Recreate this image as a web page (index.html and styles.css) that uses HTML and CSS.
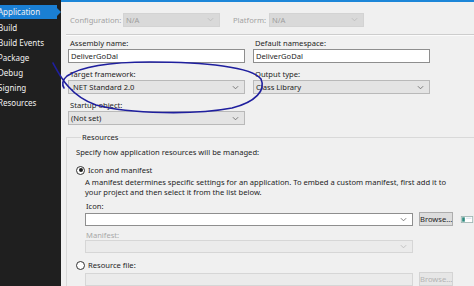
FILE: index.html
```html
<!DOCTYPE html>
<html>
<head>
<meta charset="utf-8">
<link rel="stylesheet" href="styles.css">
</head>
<body>
<div class="page">
  <nav class="sidebar">
    <div class="nav-item selected">Application</div>
    <div class="nav-item">Build</div>
    <div class="nav-item">Build Events</div>
    <div class="nav-item">Package</div>
    <div class="nav-item">Debug</div>
    <div class="nav-item">Signing</div>
    <div class="nav-item">Resources</div>
  </nav>
  <main class="main">
    <div class="topline"></div>
    <div class="config-row">
      <span class="dim-label cfg-label">Configuration:</span>
      <div class="combo disabled cfg-combo"><span>N/A</span><svg class="chev" viewBox="0 0 8 5"><polyline points="1,1 4,4 7,1"/></svg></div>
      <span class="dim-label plat-label">Platform:</span>
      <div class="combo disabled plat-combo"><span>N/A</span><svg class="chev" viewBox="0 0 8 5"><polyline points="1,1 4,4 7,1"/></svg></div>
    </div>
    <div class="separator"></div>
    <div class="form-grid">
      <div class="field">
        <label class="lbl">Assembly name:</label>
        <div class="textbox">DeliverGoDal</div>
      </div>
      <div class="field">
        <label class="lbl">Default namespace:</label>
        <div class="textbox">DeliverGoDal</div>
      </div>
      <div class="field">
        <label class="lbl">Target framework:</label>
        <div class="combo"><span>.NET Standard 2.0</span><svg class="chev" viewBox="0 0 8 5"><polyline points="1,1 4,4 7,1"/></svg></div>
      </div>
      <div class="field">
        <label class="lbl">Output type:</label>
        <div class="combo"><span>Class Library</span><svg class="chev" viewBox="0 0 8 5"><polyline points="1,1 4,4 7,1"/></svg></div>
      </div>
      <div class="field">
        <label class="lbl">Startup object:</label>
        <div class="combo"><span>(Not set)</span><svg class="chev" viewBox="0 0 8 5"><polyline points="1,1 4,4 7,1"/></svg></div>
      </div>
    </div>
    <fieldset class="group">
      <legend class="legend">Resources</legend>
      <p class="line specify">Specify how application resources will be managed:</p>
      <div class="radio-row">
        <span class="radio checked"></span><span>Icon and manifest</span>
      </div>
      <div class="indent">
        <p class="line">A manifest determines specific settings for an application. To embed a custom manifest, first add it to</p>
        <p class="line">your project and then select it from the list below.</p>
        <p class="line icon-label">Icon:</p>
        <div class="browse-row">
          <div class="combo white wide"><span></span><svg class="chev" viewBox="0 0 8 5"><polyline points="1,1 4,4 7,1"/></svg></div>
          <div class="button">Browse...</div>
          <svg class="app-icon" viewBox="0 0 14 8"><rect x="0.5" y="0.5" width="13" height="7" fill="#ffffff" stroke="#9fb6b3"/><rect x="1.5" y="1.5" width="3" height="5" fill="#2d8a7e"/><rect x="6" y="2" width="6" height="1" fill="#c9d9e8"/></svg>
        </div>
        <p class="line dim manifest-label">Manifest:</p>
        <div class="combo faded wide"><span></span><svg class="chev" viewBox="0 0 8 5"><polyline points="1,1 4,4 7,1"/></svg></div>
      </div>
      <div class="radio-row res-row">
        <span class="radio"></span><span>Resource file:</span>
      </div>
      <div class="indent">
        <div class="browse-row">
          <div class="textbox faded-box wide"></div>
          <div class="button disabled-btn">Browse...</div>
        </div>
      </div>
    </fieldset>
  </main>
  <svg class="scribble" viewBox="0 0 474 286" width="474" height="286">
    <path d="M53 63 C60 76 70 96 96 105 C130 114 195 115 232 108 C256 102 266 90 261 79 C252 67 205 62 150 62 C112 62 82 66 67 76 C62 80 62 85 64 88"/>
  </svg>
</div>
</body>
</html>
```

FILE: styles.css
```css
* { box-sizing: border-box; }
html, body {
  margin: 0;
  padding: 0;
  width: 474px;
  height: 286px;
  overflow: hidden;
  background: #f0f0f0;
  font-family: "Noto Sans", "Open Sans", sans-serif;
  font-size: 7.6px;
  color: #1e1e1e;
}
.page {
  position: relative;
  display: flex;
  width: 474px;
  height: 286px;
}
.sidebar {
  width: 61px;
  flex: none;
  background: #1f1f1f;
  padding-top: 5px;
  color: #f1f1f1;
  font-size: 8px;
}
.nav-item {
  position: relative;
  height: 15px;
  line-height: 15px;
  padding-left: 0;
  text-indent: -2px;
  white-space: nowrap;
  overflow: visible;
}
.nav-item.selected {
  background: #1a7fd4;
  width: 57px;
  height: 14px;
  line-height: 14px;
  margin-bottom: 1px;
}
.nav-item.selected::after {
  content: "";
  position: absolute;
  right: -4px;
  top: 3px;
  border-left: 4px solid #1a7fd4;
  border-top: 4px solid transparent;
  border-bottom: 4px solid transparent;
}
.main {
  flex: 1;
  padding-left: 7px;
  display: flex;
  flex-direction: column;
}
.topline {
  height: 2px;
  background: #1c86d8;
  margin-left: -7px;
}
.config-row {
  display: flex;
  align-items: center;
  margin-top: 11px;
  height: 13px;
}
.dim-label { color: #a2a2a2; }
.cfg-label { margin-left: 2px; width: 53px; }
.cfg-combo { width: 97px; height: 13px; }
.plat-label { margin-left: 13px; width: 36px; }
.plat-combo { width: 95px; height: 13px; }
.separator {
  margin-top: 8px;
  margin-left: -2px;
  height: 2px;
  border-top: 1px solid #cdcdcd;
  border-bottom: 1px solid #fbfbfb;
}
.form-grid {
  display: grid;
  grid-template-columns: 177px 177px;
  column-gap: 8px;
  row-gap: 6px;
  margin-top: 2px;
}
.field {
  display: flex;
  flex-direction: column;
}
.lbl {
  height: 11px;
  line-height: 11px;
  padding-left: 2px;
}
.textbox {
  height: 14px;
  background: #ffffff;
  border: 1px solid #8e8e8e;
  line-height: 12px;
  padding-left: 2px;
  white-space: nowrap;
}
.textbox.faded-box {
  background: #ebebeb;
  border-color: #d6d6d6;
}
.combo {
  height: 14px;
  display: flex;
  align-items: center;
  justify-content: space-between;
  background: #e4e4e4;
  border: 1px solid #b9b9b9;
  padding: 0 5px 0 2px;
  white-space: nowrap;
}
.combo.disabled {
  background: #d9d9d9;
  border-color: #d3d3d3;
  color: #9d9d9d;
}
.combo.white {
  background: #ffffff;
  border-color: #8e8e8e;
}
.combo.faded {
  background: #ebebeb;
  border-color: #d6d6d6;
}
.chev {
  width: 7px;
  height: 5px;
  fill: none;
  stroke: #6d6d6d;
  stroke-width: 1;
}
.combo.disabled .chev, .combo.faded .chev { stroke: #bdbdbd; }
.group {
  margin: 7px 0 0 -2px;
  padding: 0 0 0 9px;
  border: 1px solid #d9d9d9;
  border-right: none;
  border-bottom: none;
  min-width: 0;
}
.legend {
  padding: 0 1px;
  margin-left: 5px;
  line-height: 10px;
  height: 10px;
}
.line {
  margin: 0;
  line-height: 10px;
  height: 10px;
  white-space: nowrap;
}
.specify { margin-top: 5px; }
.radio-row {
  display: flex;
  align-items: center;
  height: 10px;
  margin-top: 8px;
  gap: 3px;
}
.radio {
  width: 9px;
  height: 9px;
  border-radius: 50%;
  border: 1px solid #333333;
  background: #ffffff;
  position: relative;
  flex: none;
}
.radio.checked::after {
  content: "";
  position: absolute;
  left: 1.5px;
  top: 1.5px;
  width: 4px;
  height: 4px;
  border-radius: 50%;
  background: #1e1e1e;
}
.indent {
  padding-left: 9px;
  display: flex;
  flex-direction: column;
}
.indent > .line:first-child { margin-top: 2px; }
.icon-label { margin-top: 4px; padding-left: 1px; }
.browse-row {
  display: flex;
  align-items: center;
  gap: 6px;
  margin-top: 1px;
}
.wide { width: 328px; flex: none; height: 13px; }
.button {
  width: 34px;
  height: 14px;
  flex: none;
  background: #dddddd;
  border: 1px solid #adadad;
  line-height: 12px;
  text-align: center;
}
.disabled-btn {
  background: #e6e6e6;
  border-color: #d4d4d4;
  color: #b4b4b4;
}
.app-icon {
  width: 14px;
  height: 7px;
  flex: none;
  margin-left: 1px;
}
.dim { color: #a8a8a8; }
.manifest-label { margin-top: 4px; padding-left: 1px; }
.res-row { margin-top: 7px; }
.res-row + .indent .browse-row { margin-top: 2px; }
.scribble {
  position: absolute;
  left: 0;
  top: 0;
  pointer-events: none;
  fill: none;
  stroke: #1f1f9e;
  stroke-width: 1.6;
  stroke-linecap: round;
}
```
